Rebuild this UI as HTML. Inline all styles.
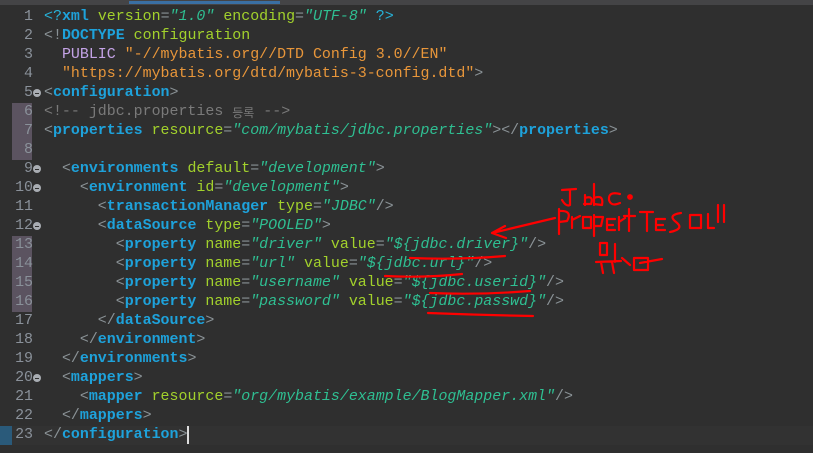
<!DOCTYPE html>
<html><head><meta charset="utf-8"><style>
html,body{margin:0;padding:0;width:813px;height:453px;overflow:hidden;background:#2f2f2f}
#top{position:absolute;left:0;top:0;width:813px;height:5px;background:#444446}
#tab{position:absolute;left:129px;top:1px;width:151px;height:3px;background:#3a6fa3}
.ln{position:absolute;left:0;height:19px;width:813px;font:14.95px/19px "Liberation Mono",monospace;white-space:pre;color:#c8c8c8;overflow:hidden}
.n{position:absolute;left:0;width:33px;text-align:right;color:#8a919a}
.g{position:absolute;left:12px;width:20px;height:19px;background:#5b5360}
.c{position:absolute;left:44px;top:0}
.f{position:absolute;left:33px;top:5px;width:8px;height:8px;border-radius:50%;background:#a9adb3}
.f::after{content:"";position:absolute;left:2px;top:3.5px;width:4px;height:1px;background:#2f2f2f}
.p{color:#8a9296}.t{color:#1ea2db;font-weight:bold}.a{color:#a2d12c}.v{color:#2fbf92;font-style:italic}
.k{color:#27b2d8}.d{color:#c4a3e6}.s{color:#e8963a}.cm{color:#7a7a7a}
.kr{font-family:"Noto Sans CJK KR",sans-serif;font-size:12px;line-height:19px;vertical-align:top}
</style></head><body>
<div id="top"></div><div id="tab"></div>
<div class="ln" style="top:8px"><span class="n">1</span><span class="c"><span class="k">&lt;?</span><span class="t">xml</span> <span class="a">version</span><span class="p">=</span><span class="v">"1.0"</span> <span class="a">encoding</span><span class="p">=</span><span class="v">"UTF-8"</span> <span class="k">?&gt;</span></span></div>
<div class="ln" style="top:27px"><span class="n">2</span><span class="c"><span class="p">&lt;!</span><span class="t">DOCTYPE</span> <span class="a">configuration</span></span></div>
<div class="ln" style="top:46px"><span class="n">3</span><span class="c">  <span class="d">PUBLIC</span> <span class="s">"-//mybatis.org//DTD Config 3.0//EN"</span></span></div>
<div class="ln" style="top:65px"><span class="n">4</span><span class="c">  <span class="s">"https://mybatis.org/dtd/mybatis-3-config.dtd"</span><span class="p">&gt;</span></span></div>
<div class="ln" style="top:84px"><span class="n">5</span><span class="f"></span><span class="c"><span class="p">&lt;</span><span class="t">configuration</span><span class="p">&gt;</span></span></div>
<div class="ln" style="top:103px"><span class="g"></span><span class="n">6</span><span class="c cm">&lt;!-- jdbc.properties <span class="kr">등록</span> --&gt;</span></div>
<div class="ln" style="top:122px"><span class="g"></span><span class="n">7</span><span class="c"><span class="p">&lt;</span><span class="t">properties</span> <span class="a">resource</span><span class="p">=</span><span class="v">"com/mybatis/jdbc.properties"</span><span class="p">&gt;&lt;/</span><span class="t">properties</span><span class="p">&gt;</span></span></div>
<div class="ln" style="top:141px"><span class="g"></span><span class="n">8</span></div>
<div class="ln" style="top:160px"><span class="n">9</span><span class="f"></span><span class="c">  <span class="p">&lt;</span><span class="t">environments</span> <span class="a">default</span><span class="p">=</span><span class="v">"development"</span><span class="p">&gt;</span></span></div>
<div class="ln" style="top:179px"><span class="n">10</span><span class="f"></span><span class="c">    <span class="p">&lt;</span><span class="t">environment</span> <span class="a">id</span><span class="p">=</span><span class="v">"development"</span><span class="p">&gt;</span></span></div>
<div class="ln" style="top:198px"><span class="n">11</span><span class="c">      <span class="p">&lt;</span><span class="t">transactionManager</span> <span class="a">type</span><span class="p">=</span><span class="v">"JDBC"</span><span class="p">/&gt;</span></span></div>
<div class="ln" style="top:217px"><span class="n">12</span><span class="f"></span><span class="c">      <span class="p">&lt;</span><span class="t">dataSource</span> <span class="a">type</span><span class="p">=</span><span class="v">"POOLED"</span><span class="p">&gt;</span></span></div>
<div class="ln" style="top:236px"><span class="g"></span><span class="n">13</span><span class="c">        <span class="p">&lt;</span><span class="t">property</span> <span class="a">name</span><span class="p">=</span><span class="v">"driver"</span> <span class="a">value</span><span class="p">=</span><span class="v">"${jdbc.driver}"</span><span class="p">/&gt;</span></span></div>
<div class="ln" style="top:255px"><span class="g"></span><span class="n">14</span><span class="c">        <span class="p">&lt;</span><span class="t">property</span> <span class="a">name</span><span class="p">=</span><span class="v">"url"</span> <span class="a">value</span><span class="p">=</span><span class="v">"${jdbc.url}"</span><span class="p">/&gt;</span></span></div>
<div class="ln" style="top:274px"><span class="g"></span><span class="n">15</span><span class="c">        <span class="p">&lt;</span><span class="t">property</span> <span class="a">name</span><span class="p">=</span><span class="v">"username"</span> <span class="a">value</span><span class="p">=</span><span class="v">"${jdbc.userid}"</span><span class="p">/&gt;</span></span></div>
<div class="ln" style="top:293px"><span class="g"></span><span class="n">16</span><span class="c">        <span class="p">&lt;</span><span class="t">property</span> <span class="a">name</span><span class="p">=</span><span class="v">"password"</span> <span class="a">value</span><span class="p">=</span><span class="v">"${jdbc.passwd}"</span><span class="p">/&gt;</span></span></div>
<div class="ln" style="top:312px"><span class="n">17</span><span class="c">      <span class="p">&lt;/</span><span class="t">dataSource</span><span class="p">&gt;</span></span></div>
<div class="ln" style="top:331px"><span class="n">18</span><span class="c">    <span class="p">&lt;/</span><span class="t">environment</span><span class="p">&gt;</span></span></div>
<div class="ln" style="top:350px"><span class="n">19</span><span class="c">  <span class="p">&lt;/</span><span class="t">environments</span><span class="p">&gt;</span></span></div>
<div class="ln" style="top:369px"><span class="n">20</span><span class="f"></span><span class="c">  <span class="p">&lt;</span><span class="t">mappers</span><span class="p">&gt;</span></span></div>
<div class="ln" style="top:388px"><span class="n">21</span><span class="c">    <span class="p">&lt;</span><span class="t">mapper</span> <span class="a">resource</span><span class="p">=</span><span class="v">"org/mybatis/example/BlogMapper.xml"</span><span class="p">/&gt;</span></span></div>
<div class="ln" style="top:407px"><span class="n">22</span><span class="c">  <span class="p">&lt;/</span><span class="t">mappers</span><span class="p">&gt;</span></span></div>
<div class="ln" style="top:426px;background:#323232"><span style="position:absolute;left:0;top:0;width:12px;height:19px;background:#2a5a7a"></span><span class="n">23</span><span class="c"><span class="p">&lt;/</span><span class="t">configuration</span><span class="p">&gt;</span><span style="display:inline-block;width:2px;height:18px;background:#ddd;vertical-align:top"></span></span></div>
<svg width="813" height="453" style="position:absolute;left:0;top:0" fill="none" stroke="#f00" stroke-width="2.2" stroke-linecap="round" stroke-linejoin="round">
<path d="M410 258 Q460 260 505 256"/><path d="M385 276 Q425 278 462 274"/><path d="M430 293 Q480 295 530 291"/><path d="M428 313 Q480 315 533 316"/>
<path d="M555 218 L492 233 M492 233 L505 226 M492 233 L506 238"/>
<path d="M562 190 L576 189 M570 190 L570 205 Q566 207 562 200"/>
<path d="M585 195 L585 205 M585 198 Q594 195 591 204 L584 204 M594 184 L594 205 M594 198 Q604 194 602 205 L594 204 M620 194 Q608 191 609 200 Q611 207 620 203"/>
<circle cx="630" cy="197" r="1.8" fill="#f00"/>
<path d="M559 209 L559 234 M559 211 Q573 210 567 221 L559 222 M572 217 L572 228 M572 220 L580 216 M583 217 L591 217 L591 228 L583 228 Z M594 215 L594 236 M594 217 L603 217 L601 226 L594 226 M607 219 L615 219 M607 219 L607 230 L615 230 M607 225 L613 225 M619 217 L619 230 M619 222 L625 218 M629 209 L629 231 M624 216 L635 216 M640 212 L653 212 M647 212 L647 231 M656 219 L665 219 M656 219 L656 230 L665 230 M656 225 L663 225 M681 213 Q667 215 676 222 Q685 229 670 232 M690 215 L701 215 L701 228 L690 228 Z M708 214 L708 228 L714 228 M718 205 L718 222 M724 205 L724 222"/>
<path d="M600 243 L607 243 L607 255 L600 255 Z M615 244 L615 262 M596 262 L621 261 M601 262 L603 273 M612 262 L614 273 M622 258 L630 265 M634 258 L648 258 L648 270 L634 270 Z M640 263 L662 259"/>
</svg>
</body></html>
